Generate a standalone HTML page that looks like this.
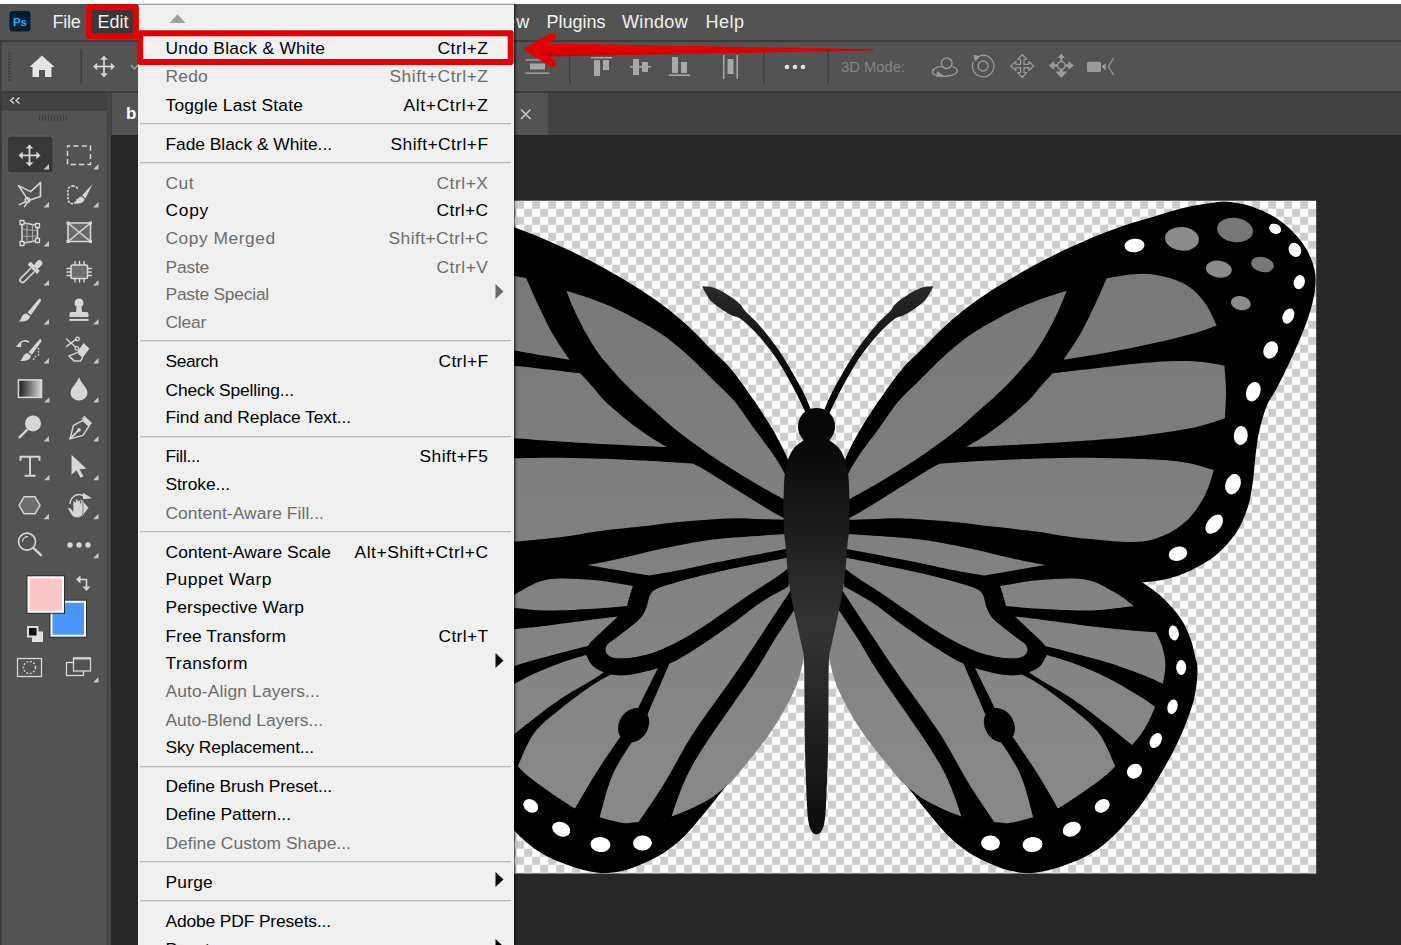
<!DOCTYPE html><html><head><meta charset="utf-8"><title>Photoshop Edit menu</title><style>

html,body{margin:0;padding:0}
html{width:1401px;height:945px;overflow:hidden}
body{width:1401px;height:945px;overflow:hidden;background:#282828;position:relative;font-family:"Liberation Sans", sans-serif;}
.abs{position:absolute}
#top{left:0;top:0;width:1401px;height:4px;background:#fff}
#menubar{left:0;top:4px;width:1401px;height:36px;background:#535353}
#mbline{left:0;top:40px;width:1401px;height:2px;background:#3b3b3b}
#optbar{left:0;top:42px;width:1401px;height:49px;background:#535353}
#obline{left:0;top:91px;width:1401px;height:2px;background:#3b3b3b}
#tabbar{left:0;top:93px;width:1401px;height:42px;background:#424242}
#tab{left:112px;top:93px;width:436px;height:42px;background:#535353}
.mb{position:absolute;top:4px;height:36px;line-height:37px;color:#f0f0f0;font-size:18px;white-space:nowrap}
.mi{position:absolute;height:28px;line-height:28px;font-size:17.4px;white-space:nowrap;color:#000}
.mi.d{color:#6d6d6d}
.sep{position:absolute;left:140px;width:371px;height:1px;background:#b9b9b9;border-bottom:1px solid #e2e2e2}
#menu{left:137.5px;top:4px;width:376px;height:941px;background:#f0f0f0;box-shadow:1px 0 0 rgba(0,0,0,.3),2px 0 2px rgba(0,0,0,.4);border-top:1px solid #999;box-sizing:border-box}
svg{position:absolute;left:0;top:0}

</style></head><body>
<svg width="1401" height="945" viewBox="0 0 1401 945">
<defs><pattern id="ck" x="316.2" y="200.7" width="16" height="16" patternUnits="userSpaceOnUse"><rect width="16" height="16" fill="#fff"/><rect x="8" width="8" height="8" fill="#ccc"/><rect y="8" width="8" height="8" fill="#ccc"/></pattern></defs>
<rect x="316.2" y="200.7" width="1000" height="672.8" fill="url(#ck)"/>
<defs><linearGradient id="gw" gradientUnits="userSpaceOnUse" x1="0" y1="230" x2="0" y2="830"><stop offset="0" stop-color="#777"/><stop offset="1" stop-color="#898989"/></linearGradient><linearGradient id="gb" gradientUnits="userSpaceOnUse" x1="0" y1="286" x2="0" y2="835"><stop offset="0" stop-color="#2a2a2a"/><stop offset="0.2" stop-color="#000"/><stop offset="0.3" stop-color="#0a0a0a"/><stop offset="0.62" stop-color="#343434"/><stop offset="1" stop-color="#0c0c0c"/></linearGradient><clipPath id="cv"><rect x="316.2" y="200.7" width="1000" height="672.8"/></clipPath></defs>
<g clip-path="url(#cv)">
<g id="rw"><path d="M845 462C845.3 460.9 844.2 460.9 846.7 455.6C849.2 450.3 854.6 439.2 860 430C865.4 420.8 872.1 410.5 879 400.5C885.9 390.5 894.5 378.2 901.3 370C908.1 361.8 912.6 358.5 920 351.1C927.4 343.7 936.9 333.4 945.4 325.7C953.9 318 962.3 311.1 970.8 304.8C979.3 298.5 988 292.9 996.2 287.6C1004.4 282.4 1012.3 277.7 1020 273.3C1027.7 268.9 1034.8 265 1042.2 261.1C1049.6 257.2 1057 253.5 1064.4 250C1071.8 246.5 1079.3 243.2 1086.7 240C1094.1 236.8 1101.5 233.9 1108.9 231.1C1116.3 228.3 1123.7 225.7 1131.1 223.3C1138.5 220.9 1145.9 218.9 1153.3 216.7C1160.7 214.5 1168.2 211.9 1175.6 210C1183 208.1 1189.7 206.5 1197.8 205.1C1205.9 203.7 1216.2 201.7 1224.4 201.7C1232.6 201.7 1239.3 203 1246.7 205C1254.1 207 1262.2 210.4 1268.9 213.9C1275.6 217.4 1281.2 221.3 1286.7 226.1C1292.2 230.9 1298 236.9 1302.2 242.8C1306.5 248.7 1310 255.6 1312.2 261.7C1314.4 267.8 1315.4 273.1 1315.6 279.4C1315.8 285.7 1314.8 292.3 1313.3 299.4C1311.8 306.4 1309.3 314.3 1306.7 321.7C1304.1 329.1 1301.1 336.1 1297.8 343.9C1294.5 351.7 1290.4 360.5 1286.7 368.3C1283 376.1 1278.9 384.4 1275.6 390.6C1272.3 396.8 1269.6 398.7 1266.9 405.4C1264.2 412.1 1261.2 422.4 1259.3 430.8C1257.4 439.2 1256.6 447.7 1255.5 456.1C1254.4 464.6 1254.2 473 1252.9 481.5C1251.6 490 1250.7 498.4 1247.9 506.9C1245.2 515.4 1241.7 524.3 1236.4 532.3C1231.1 540.3 1223.7 548.8 1216.1 555.1C1208.5 561.5 1199.2 566.4 1190.8 570.4C1182.3 574.4 1173.5 577.2 1165.4 579.2C1157.4 581.2 1146.3 582 1142.5 582.5C1135.4 583.8 1116.2 590.4 1100 590C1083.8 589.6 1067.5 585 1045 580C1022.5 575 986.7 565.8 965 560C943.3 554.2 935.8 548.3 915 545C894.2 541.7 852.5 540.8 840 540C840 528.3 840 481.7 840 470C840.8 468.7 844.2 463.3 845 462Z" fill="#000"/>
<path d="M842 534C868.3 535 973.7 539 1000 540C1023.8 547.1 1118.8 575.4 1142.5 582.5C1145.8 585 1156.2 591.7 1162.5 597.5C1168.8 603.3 1175.4 610.8 1180 617.5C1184.6 624.2 1187.5 631.1 1190 637.5C1192.5 643.9 1193.8 650.6 1195 656C1196.2 661.4 1197.7 662.7 1197.5 670C1197.3 677.3 1196.7 688.8 1193.8 700C1190.8 711.2 1185.6 725 1180 737.5C1174.4 750 1167.5 762.5 1160 775C1152.5 787.5 1145 800.4 1135 812.5C1125 824.6 1112.1 838.6 1100 847.5C1087.9 856.4 1075 861.8 1062.5 866C1050 870.2 1037.5 873.6 1025 873C1012.5 872.4 1000 868.4 987.5 862.5C975 856.6 964.2 851.2 950 837.5C935.8 823.8 910 789.6 902 780C898.3 775 887 763.3 880 750C873 736.7 865 716.7 860 700C855 683.3 852.5 666.7 850 650C847.5 633.3 846.3 619.3 845 600C843.7 580.7 842.5 545 842 534Z" fill="#000"/>
<path d="M1066.7 290.8C1063.4 291.9 1054.5 294.5 1047 297.1C1039.5 299.8 1030.1 303 1021.6 306.7C1013.1 310.4 1004.7 314.8 996.2 319.4C987.7 324 979.3 328.7 970.8 334.6C962.3 340.5 952.2 349 945.4 354.9C938.6 360.8 934.5 365.4 929.8 370C925.1 374.6 922.4 377.4 917.1 382.7C911.8 388 904.7 393.8 898.1 401.7C891.5 409.6 884.5 420.8 877.8 430C871.1 439.2 863.1 449.3 858 457C852.9 464.7 848.8 472.8 847 476C847 480.1 847 496.4 847 500.5C850.6 498.5 860.2 493.5 868.6 488.6C877 483.8 887.6 477.3 897.1 471.4C906.6 465.4 916.2 459.4 925.7 452.9C935.2 446.3 944.8 439.7 954.3 432.1C963.8 424.5 976.8 412.5 982.9 407.1C989 401.8 986.8 404 991.1 400C995.4 396 1003.8 388.1 1008.9 382.9C1014 377.7 1017.4 373.8 1021.6 368.9C1025.8 364 1030.1 359.6 1034.3 353.7C1038.5 347.8 1042.8 340.9 1047 333.3C1051.2 325.7 1056.4 315 1059.7 307.9C1063 300.8 1065.5 293.6 1066.7 290.8Z" fill="url(#gw)"/>
<path d="M1106.7 278.2C1110.8 277.6 1123.3 275 1131.1 274.4C1138.9 273.8 1145.9 273.5 1153.3 274.4C1160.7 275.3 1168.9 277.4 1175.6 280C1182.3 282.6 1188.1 285.7 1193.3 290C1198.5 294.3 1202.8 299.7 1206.7 305.6C1210.6 311.5 1215 322.3 1216.7 325.6C1213.5 326.7 1208.4 329.2 1197.8 332.2C1187.2 335.1 1168.1 340 1153.3 343.3C1138.5 346.6 1123.9 349.5 1108.9 352.2C1093.9 354.9 1071.1 358.4 1063.5 359.7C1066.2 355.5 1074.7 344 1080 334.6C1085.3 325.2 1091.1 312.7 1095.6 303.3C1100 293.9 1104.8 282.4 1106.7 278.2Z" fill="url(#gw)"/>
<path d="M1052.7 373.3C1062.1 372.2 1092.1 368.6 1108.9 366.7C1125.7 364.8 1140.3 363.1 1153.3 362.2C1166.3 361.3 1177.4 361 1186.7 361.1C1196 361.2 1202.6 362.1 1208.9 362.9C1215.2 363.6 1221.8 365.2 1224.4 365.6C1224.7 369.7 1225.9 381.4 1226 390C1226.1 398.6 1225.2 412.9 1225 417.5C1224.2 417.9 1226.2 418.1 1220 420C1213.8 421.9 1203.3 425.8 1187.5 428.8C1171.7 431.7 1149.6 435 1125 437.5C1100.4 440 1061.3 442.2 1040 443.6C1018.7 445 1009.4 445.1 997.1 445.7C984.8 446.3 971.5 446.9 966.4 447.1C969.1 445.4 977.8 440.4 982.9 437.1C988 433.8 992.4 430.7 997.1 427.1C1001.9 423.5 1006 420.2 1011.4 415.7C1016.8 411.2 1024.3 404.9 1029.2 400C1034.1 395.1 1037.1 390.4 1041 386C1044.9 381.6 1050.8 375.4 1052.7 373.3Z" fill="url(#gw)"/>
<path d="M846 520C849.8 517.9 860.1 512.2 868.6 507.1C877.1 502 887.6 495.2 897.1 489.3C906.6 483.4 918.6 475.7 925.7 471.4C932.9 467.1 937.6 464.9 940 463.6C944.8 463.3 959.1 462.2 968.6 461.7C978.1 461.1 985.2 460.8 997.1 460.3C1009 459.8 1022.9 459 1040 458.6C1057.2 458.2 1077.5 457.6 1100 458C1122.5 458.4 1156 459 1175 461C1194 463 1207.3 468.5 1213.8 470C1212.3 474.2 1209.4 486.7 1205 495C1200.6 503.3 1194.6 513.2 1187.5 520C1180.4 526.8 1171.7 532.3 1162.5 536C1153.3 539.7 1147.1 541.8 1132.5 542C1117.9 542.2 1090.4 539.1 1075 537.5C1059.6 535.9 1050.6 533.6 1040 532.1C1029.4 530.6 1020.9 529.7 1011.4 528.6C1001.9 527.5 992.4 526.5 982.9 525.4C973.4 524.3 963.8 523 954.3 522.1C944.8 521.2 935.2 520.3 925.7 519.7C916.2 519.1 906.6 518.4 897.1 518.3C887.6 518.2 877.1 519 868.6 519.3C860.1 519.6 849.8 519.9 846 520Z" fill="url(#gw)"/>
<path d="M847 534C858.3 534.8 895.3 536.8 915 539C934.7 541.2 948.3 544.2 965 547.5C981.7 550.8 1001.7 556.1 1015 559C1028.3 561.9 1040 564 1045 565C1034.8 566.8 994 573.8 983.8 575.5C978.5 574.6 964 572.2 952.5 570C941 567.8 932.6 565.5 915 562C897.4 558.5 858.3 551.2 847 549C847 546.5 847 536.5 847 534Z" fill="url(#gw)"/>
<path d="M845 557.5C856.8 559.9 896.8 567.8 915.7 572C934.6 576.2 948.6 580.1 958.6 582.9C968.6 585.7 971.7 586.6 975.7 588.6C979.8 590.6 981 591.7 982.9 595C984.8 598.3 985.1 604.4 987 608.6C988.9 612.8 989.5 615.3 994.3 620C999.1 624.7 1010.4 632.7 1015.7 637C1021.1 641.3 1024.7 642.8 1026.4 645.7C1028.1 648.6 1027.5 652.2 1025.7 654.3C1023.9 656.4 1020.9 657.9 1015.7 658.3C1010.5 658.6 1001.4 657.8 994.3 656.4C987.2 655 981.2 653.5 972.9 650C964.6 646.5 953.8 641.2 944.3 635.7C934.8 630.2 925.2 623.5 915.7 617C906.2 610.5 896.5 603.4 887 597C877.5 590.6 865.6 583.3 858.6 578.6C851.6 573.9 847.3 570.3 845 568.6C845 566.8 845 559.4 845 557.5Z" fill="url(#gw)"/>
<path d="M1000 586C1006.7 585 1025.8 581.1 1040 580C1054.2 578.9 1072.5 577.4 1085 579.5C1097.5 581.6 1106.9 588.1 1115 592.5C1123.1 596.9 1130.6 603.8 1133.8 606C1126.5 606.8 1105.6 610 1090 610.5C1074.4 611 1054 609.5 1040 608.8C1026 608 1011.7 606.5 1006 606C1005.5 604.2 1004 598.3 1003 595C1002 591.7 1000.5 587.5 1000 586Z" fill="url(#gw)"/>
<path d="M1015 616.5C1019.2 617 1027.4 617.9 1040 619.5C1052.6 621.1 1073.9 624.2 1090.8 626.2C1107.7 628.2 1130.7 630.3 1141.6 631.3C1152.5 632.3 1153.6 632.1 1156 632.2C1157 634.5 1160.4 641.2 1161.9 645.7C1163.4 650.2 1164.5 655.1 1165 659.3C1165.5 663.5 1165.4 667 1165 671.1C1164.6 675.2 1163.2 681.7 1162.8 683.8C1159.3 682.2 1150.8 678 1141.6 674.5C1132.4 671 1119 666.1 1107.7 662.6C1096.4 659.1 1084.4 656.1 1073.9 653.3C1063.5 650.5 1049.8 647.2 1045 646C1044.2 645 1045 644.9 1040 640C1035 635.1 1019.2 620.4 1015 616.5Z" fill="url(#gw)"/>
<path d="M838 583C843.8 586.3 862.3 596 872.9 602.9C883.5 609.8 890.7 616.7 901.4 624.3C912.1 631.9 926.4 641.9 937 648.6C947.6 655.3 954.8 660.1 964.8 664.3C974.8 668.5 987.8 672 997 673.8C1006.2 675.5 1013 675.9 1020 674.8C1027 673.7 1034.5 670.3 1039 667C1043.5 663.7 1045.5 657 1046.8 655C1051.3 656.4 1063.8 659.7 1073.9 663.5C1084.1 667.3 1096.4 672.2 1107.7 677.9C1119 683.5 1133.7 692.6 1141.6 697.4C1149.5 702.2 1152.8 705.2 1155.1 706.7C1154 709.2 1150.9 717.1 1148.4 721.9C1145.9 726.7 1142.9 731.3 1139.9 735.5C1136.9 739.7 1134.3 742.3 1130.6 747C1126.9 751.7 1122.6 758.2 1117.5 763.8C1112.4 769.2 1110 772.5 1100 780C1090 787.5 1067.9 802.8 1057.5 808.8C1047.1 814.8 1045 813.7 1037.5 816C1030 818.3 1018.8 821.4 1012.5 822.5C1006.2 823.6 1007.9 823.3 1000 822.5C992.1 821.7 977.5 821.2 965 817.5C952.5 813.8 935.8 806.2 925 800C914.2 793.8 904.2 783.3 900 780C893.8 772.1 872.9 747.9 862.5 732.5C852.1 717.1 843.2 701.2 837.5 687.5C831.8 673.8 829.9 661.2 828 650C826.1 638.8 824.3 631.2 826 620C827.7 608.8 836 589.2 838 583Z" fill="url(#gw)"/>
<path d="M842 590C847.2 597.8 863.6 622.8 873 637C882.4 651.2 887.4 658.9 898.6 675C909.8 691.1 928.3 715.8 940 733.8C951.7 751.8 959.1 767.9 968.6 783.3C978.1 798.7 992.3 818.9 997 826C991.5 825.7 969.5 824.3 964 824C960 814 954 789.1 940 764.3C926 739.5 893.6 695.7 880 675C866.4 654.3 865.9 651.5 858.6 640C851.3 628.5 839.8 611.7 836 606C837 603.3 841 592.7 842 590Z" fill="#000"/>
<path d="M962 660C965.8 668.8 980.1 702.2 984.8 712.9C989.5 723.6 989.1 722.1 990 724C991.7 723.7 998.3 722.3 1000 722C999.2 719.8 999.5 718.3 995.2 709C990.9 699.7 977.5 673.2 974 666C972 665 964 661 962 660Z" fill="#000"/>
<ellipse cx="999.4" cy="725.2" rx="14.5" ry="18" fill="#000" transform="rotate(-32 999.4 725.2)"/>
<path d="M997 736C999.2 735.5 1007.8 733.5 1010 733C1013.6 738.2 1025.3 755 1031.4 764.3C1037.5 773.6 1041.9 781 1046.7 789C1051.5 797 1057.8 808.2 1060 812C1055.7 813.3 1038.3 818.7 1034 820C1031.7 812.3 1026.2 787.8 1020 773.8C1013.8 759.8 1000.8 742.3 997 736Z" fill="#000"/>
<path d="M1026 670C1028.3 671.6 1032 674.6 1040 679.6C1048 684.6 1062.6 692.3 1073.9 699.9C1085.2 707.5 1097.9 717.6 1107.7 725.3C1117.5 733 1128.8 742.5 1133 746C1130.2 749.7 1118.8 764.3 1116 768C1113.2 762.3 1106.3 743.5 1099.3 733.8C1092.3 724.1 1083.8 718.2 1073.9 710C1064 701.8 1049.5 691 1040 684.7C1030.5 678.4 1020.8 674.1 1017 672C1018.5 671.7 1024.5 670.3 1026 670Z" fill="#000"/>
<ellipse cx="1134.5" cy="245.5" rx="10" ry="6.8" fill="#fff" transform="rotate(-5 1134.5 245.5)"/>
<ellipse cx="1182" cy="238.8" rx="17" ry="11.8" fill="#8b8b8b" transform="rotate(5 1182 238.8)"/>
<ellipse cx="1235" cy="230" rx="18" ry="12" fill="#777" transform="rotate(8 1235 230)"/>
<ellipse cx="1218.8" cy="269.2" rx="13" ry="8.5" fill="#8b8b8b" transform="rotate(8 1218.8 269.2)"/>
<ellipse cx="1262.5" cy="264.5" rx="11.5" ry="7.5" fill="#777" transform="rotate(12 1262.5 264.5)"/>
<ellipse cx="1240.8" cy="303.2" rx="10" ry="7" fill="#8b8b8b" transform="rotate(10 1240.8 303.2)"/>
<ellipse cx="1275.1" cy="228.8" rx="6.2" ry="4.9" fill="#fff" transform="rotate(25 1275.1 228.8)"/>
<ellipse cx="1294.9" cy="249.9" rx="6" ry="7.3" fill="#fff" transform="rotate(-25 1294.9 249.9)"/>
<ellipse cx="1299.3" cy="282.1" rx="5.5" ry="7.2" fill="#fff" transform="rotate(15 1299.3 282.1)"/>
<ellipse cx="1288.4" cy="316.1" rx="5.5" ry="8" fill="#fff" transform="rotate(25 1288.4 316.1)"/>
<ellipse cx="1270.7" cy="349.9" rx="7" ry="9" fill="#fff" transform="rotate(25 1270.7 349.9)"/>
<ellipse cx="1253.3" cy="391.7" rx="7" ry="10" fill="#fff" transform="rotate(20 1253.3 391.7)"/>
<ellipse cx="1240.8" cy="435.5" rx="7" ry="9.5" fill="#fff" transform="rotate(5 1240.8 435.5)"/>
<ellipse cx="1233" cy="484.2" rx="7.5" ry="10.5" fill="#fff" transform="rotate(20 1233 484.2)"/>
<ellipse cx="1214.2" cy="524.2" rx="7" ry="11" fill="#fff" transform="rotate(40 1214.2 524.2)"/>
<ellipse cx="1178" cy="553.8" rx="9.5" ry="7" fill="#fff" transform="rotate(-15 1178 553.8)"/>
<ellipse cx="1173.8" cy="633" rx="5" ry="7.5" fill="#fff" transform="rotate(-10 1173.8 633)"/>
<ellipse cx="1181.2" cy="667.5" rx="5" ry="7.5" fill="#fff"/>
<ellipse cx="1172.5" cy="706.8" rx="5" ry="7.5" fill="#fff" transform="rotate(15 1172.5 706.8)"/>
<ellipse cx="1155.8" cy="740.5" rx="5.5" ry="8" fill="#fff" transform="rotate(30 1155.8 740.5)"/>
<ellipse cx="1134.5" cy="771.2" rx="8" ry="7" fill="#fff" transform="rotate(-40 1134.5 771.2)"/>
<ellipse cx="1102.2" cy="805.8" rx="8" ry="6.2" fill="#fff" transform="rotate(-35 1102.2 805.8)"/>
<ellipse cx="1071.8" cy="829.2" rx="9.5" ry="7" fill="#fff" transform="rotate(-25 1071.8 829.2)"/>
<ellipse cx="1032.5" cy="844.5" rx="10" ry="7.5" fill="#fff" transform="rotate(-5 1032.5 844.5)"/>
<ellipse cx="990.5" cy="843" rx="9.5" ry="7.5" fill="#fff" transform="rotate(5 990.5 843)"/></g>
<use href="#rw" transform="translate(1633,0) scale(-1,1)"/>
<path d="M824.6 409.2C825.7 406.7 828.1 400.3 831 394.4C833.9 388.5 837.9 381.3 842.2 373.9C846.5 366.5 851.4 357.8 857 349.8C862.6 341.8 870.2 332 875.6 325.7C881 319.4 886.1 315.5 889.5 311.8C892.9 308.1 892.8 306.3 896 303.4C899.2 300.4 904.7 296.7 909 294.1C913.3 291.5 918 288.9 922 287.6C926 286.3 931.2 286.5 933.1 286.3C932.8 287 932.8 287.8 931.3 290.4C929.8 292.9 927 298.4 923.9 301.6C920.8 304.9 916.1 307.6 912.7 309.9C909.3 312.2 906.5 313.9 903.4 315.5C900.3 317.1 898.2 316.3 894.2 319.2C890.2 322.1 884.6 327.4 879.3 333.1C874 338.8 867.5 346.7 862.6 353.5C857.7 360.3 853.6 367.1 849.6 373.9C845.6 380.7 841.9 387.7 838.5 394.4C835.1 401.1 830.6 410.7 829 414C828.3 413.2 825.3 410 824.6 409.2Z" fill="url(#gb)"/>
<g transform="translate(1635.4,0) scale(-1,1)"><path d="M824.6 409.2C825.7 406.7 828.1 400.3 831 394.4C833.9 388.5 837.9 381.3 842.2 373.9C846.5 366.5 851.4 357.8 857 349.8C862.6 341.8 870.2 332 875.6 325.7C881 319.4 886.1 315.5 889.5 311.8C892.9 308.1 892.8 306.3 896 303.4C899.2 300.4 904.7 296.7 909 294.1C913.3 291.5 918 288.9 922 287.6C926 286.3 931.2 286.5 933.1 286.3C932.8 287 932.8 287.8 931.3 290.4C929.8 292.9 927 298.4 923.9 301.6C920.8 304.9 916.1 307.6 912.7 309.9C909.3 312.2 906.5 313.9 903.4 315.5C900.3 317.1 898.2 316.3 894.2 319.2C890.2 322.1 884.6 327.4 879.3 333.1C874 338.8 867.5 346.7 862.6 353.5C857.7 360.3 853.6 367.1 849.6 373.9C845.6 380.7 841.9 387.7 838.5 394.4C835.1 401.1 830.6 410.7 829 414C828.3 413.2 825.3 410 824.6 409.2Z" fill="url(#gb)"/></g>
<circle cx="816.5" cy="426.5" r="18.6" fill="#060606"/>
<path d="M829 440C830.5 441.2 835.5 444.2 838 447C840.5 449.8 842.4 453.2 844 457C845.6 460.8 846.7 464.5 847.6 470C848.5 475.5 848.9 480.8 849.2 490C849.5 499.2 849.6 515.8 849.3 525C849 534.2 848.4 535.4 847.5 545C846.6 554.6 845.8 570.4 844 582.9C842.2 595.4 839.1 609.6 837 620C834.9 630.4 832.8 638.3 831.5 645C830.2 651.7 829.5 650.8 829 660C828.5 669.2 828.7 685 828.5 700C828.3 715 828.4 732.5 828 750C827.6 767.5 826.6 793 826 805C825.4 817 825.2 817.7 824.5 822C823.8 826.3 822.8 828.9 821.5 831C820.2 833.1 818.2 834.5 816.5 834.5C814.8 834.5 812.8 833.1 811.5 831C810.2 828.9 809.2 826.3 808.5 822C807.8 817.7 807.6 817 807 805C806.4 793 805.4 767.5 805 750C804.6 732.5 804.7 715 804.5 700C804.3 685 804.5 669.2 804 660C803.5 650.8 802.8 651.7 801.5 645C800.2 638.3 798.1 630.4 796 620C793.9 609.6 790.8 595.4 789 582.9C787.2 570.4 786.4 554.6 785.5 545C784.6 535.4 784 534.2 783.7 525C783.4 515.8 783.5 499.2 783.8 490C784.1 480.8 784.5 475.5 785.4 470C786.3 464.5 787.4 460.8 789 457C790.6 453.2 792.5 449.8 795 447C797.5 444.2 802.5 441.2 804 440C808.2 440 824.8 440 829 440Z" fill="url(#gb)"/>
</g>
</svg>
<div id="top" class="abs"></div><div id="menubar" class="abs"></div><div id="mbline" class="abs"></div><div id="optbar" class="abs"></div><div id="obline" class="abs"></div><div id="tabbar" class="abs"></div><div id="tab" class="abs"></div><div class="abs" style="left:92px;top:10px;width:41px;height:23px;background:#383838"></div>
<svg width="1401" height="945" viewBox="0 0 1401 945">
<rect x="9.5" y="11" width="21" height="20.5" rx="3.5" fill="#001e36"/>
<text x="20" y="26" text-anchor="middle" font-family="Liberation Sans, sans-serif" font-weight="bold" font-size="11.5" fill="#31a8ff">Ps</text>
<rect x="0" y="42" width="1.5" height="49" fill="#3c3c3c"/>
<rect x="8" y="52.5" width="3" height="1.2" fill="#3d3d3d"/>
<rect x="8" y="55.5" width="3" height="1.2" fill="#3d3d3d"/>
<rect x="8" y="58.5" width="3" height="1.2" fill="#3d3d3d"/>
<rect x="8" y="61.5" width="3" height="1.2" fill="#3d3d3d"/>
<rect x="8" y="64.5" width="3" height="1.2" fill="#3d3d3d"/>
<rect x="8" y="67.5" width="3" height="1.2" fill="#3d3d3d"/>
<rect x="8" y="70.5" width="3" height="1.2" fill="#3d3d3d"/>
<rect x="8" y="73.5" width="3" height="1.2" fill="#3d3d3d"/>
<rect x="8" y="76.5" width="3" height="1.2" fill="#3d3d3d"/>
<rect x="8" y="79.5" width="3" height="1.2" fill="#3d3d3d"/>
<path d="M42 55.5 L54.5 67 L51.5 67 L51.5 77 L45 77 L45 70 L39 70 L39 77 L32.5 77 L32.5 67 L29.5 67 Z" fill="#e4e4e4"/>
<rect x="80.5" y="49" width="1.5" height="35" fill="#3e3e3e"/>
<g transform="translate(104,66.5)"><g transform="rotate(0)"><path d="M0 0 L0 -8" stroke="#d6d6d6" stroke-width="1.7" fill="none"/><path d="M-3.8 -6.8 L0 -11 L3.8 -6.8 Z" fill="#d6d6d6" stroke="none"/></g><g transform="rotate(90)"><path d="M0 0 L0 -8" stroke="#d6d6d6" stroke-width="1.7" fill="none"/><path d="M-3.8 -6.8 L0 -11 L3.8 -6.8 Z" fill="#d6d6d6" stroke="none"/></g><g transform="rotate(180)"><path d="M0 0 L0 -8" stroke="#d6d6d6" stroke-width="1.7" fill="none"/><path d="M-3.8 -6.8 L0 -11 L3.8 -6.8 Z" fill="#d6d6d6" stroke="none"/></g><g transform="rotate(270)"><path d="M0 0 L0 -8" stroke="#d6d6d6" stroke-width="1.7" fill="none"/><path d="M-3.8 -6.8 L0 -11 L3.8 -6.8 Z" fill="#d6d6d6" stroke="none"/></g></g>
<path d="M131 65 L134.5 69 L138 65" stroke="#aaa" stroke-width="1.2" fill="none"/>
<rect x="530" y="63.5" width="15" height="6" fill="#a8a8a8"/><rect x="525.5" y="72.5" width="24" height="1.3" fill="#a8a8a8"/><rect x="525.5" y="59.3" width="24" height="1.3" fill="#a8a8a8"/>
<rect x="569" y="49" width="1.5" height="35" fill="#3e3e3e"/>
<rect x="591" y="57" width="21" height="1.5" fill="#a8a8a8"/><rect x="594" y="60" width="6" height="16" fill="#a8a8a8"/><rect x="603" y="60" width="6" height="10" fill="#a8a8a8"/>
<rect x="630" y="66" width="21" height="1.5" fill="#a8a8a8"/><rect x="633" y="59" width="6" height="16" fill="#a8a8a8"/><rect x="642" y="62" width="6" height="10" fill="#a8a8a8"/>
<rect x="669" y="74.5" width="21" height="1.5" fill="#a8a8a8"/><rect x="672" y="57" width="6" height="16" fill="#a8a8a8"/><rect x="681" y="62" width="6" height="11" fill="#a8a8a8"/>
<rect x="723" y="55" width="1.5" height="24" fill="#a8a8a8"/><rect x="736.5" y="55" width="1.5" height="24" fill="#a8a8a8"/><rect x="727.5" y="59" width="6" height="15" fill="#a8a8a8"/>
<rect x="763" y="49" width="1.5" height="35" fill="#3e3e3e"/>
<circle cx="787" cy="67" r="2.3" fill="#e2e2e2"/>
<circle cx="795" cy="67" r="2.3" fill="#e2e2e2"/>
<circle cx="803" cy="67" r="2.3" fill="#e2e2e2"/>
<rect x="827.5" y="49" width="1.5" height="35" fill="#3e3e3e"/>
<text x="841" y="71.5" font-family="Liberation Sans, sans-serif" font-size="15.5" fill="#858585" textLength="64" lengthAdjust="spacingAndGlyphs">3D Mode:</text>
<g stroke="#9b9b9b" stroke-width="1.3" fill="none" stroke-linecap="round" stroke-linejoin="round"><circle cx="946.7" cy="63.2" r="5.3"/><path d="M941.3 66.3 C935 67 931.5 70 932.8 73 C934.5 76.5 945 77.3 952 75.2 C958.5 73 959 69 953 66.8"/></g><path d="M937 71.3 L943.8 75.6 L936 76.8 Z" fill="#9b9b9b"/>
<g stroke="#9b9b9b" stroke-width="1.3" fill="none" stroke-linecap="round" stroke-linejoin="round"><circle cx="983.1" cy="66" r="5"/><path d="M980.3 55.6 A10.8 10.8 0 1 1 973 62.3"/></g><path d="M973.3 54.8 L980.5 56.3 L975 61.5 Z" fill="#9b9b9b"/>
<g transform="translate(1022.3,66)"><path d="M0 -11.5 L4.5 -6.5 L1.7 -6.5 L1.7 -1.7 L6.5 -1.7 L6.5 -4.5 L11.5 0 L6.5 4.5 L6.5 1.7 L1.7 1.7 L1.7 6.5 L4.5 6.5 L0 11.5 L-4.5 6.5 L-1.7 6.5 L-1.7 1.7 L-6.5 1.7 L-6.5 4.5 L-11.5 0 L-6.5 -4.5 L-6.5 -1.7 L-1.7 -1.7 L-1.7 -6.5 L-4.5 -6.5 Z" stroke="#9b9b9b" stroke-width="1.2" fill="none" stroke-linejoin="round"/></g>
<g transform="translate(1061.3,65.5)"><circle r="3.900" stroke="#9b9b9b" stroke-width="1.3" fill="none"/><g fill="#9b9b9b"><path d="M0 -12 L3.5 -7.5 L1 -7.5 L1 -4 L-1 -4 L-1 -7.5 L-3.5 -7.5 Z"/><path d="M-12.5 0 L-7 -4.5 L-7 -1.2 L-4 -1.2 L-4 1.2 L-7 1.2 L-7 4.5 Z"/><path d="M12.5 0 L7 -4.5 L7 -1.2 L4 -1.2 L4 1.2 L7 1.2 L7 4.5 Z"/><path d="M0 12.5 L6 6 L1.5 6 L1.5 4 L-1.5 4 L-1.5 6 L-6 6 Z"/></g></g>
<rect x="1087" y="61.7" width="14" height="10.2" rx="1.5" fill="#9b9b9b"/><path d="M1101.5 66.8 L1105.7 63 L1105.7 70.6 Z" fill="#9b9b9b"/><path d="M1113.5 58 L1108.5 66.5 L1113.5 75" stroke="#9b9b9b" stroke-width="1.2" fill="none"/>
<text x="126" y="118.5" font-family="Liberation Sans, sans-serif" font-weight="bold" font-size="17" fill="#fff">b</text>
<path d="M521 109.5 L530.5 119 M530.5 109.5 L521 119" stroke="#c8c8c8" stroke-width="1.6"/>
<rect x="0" y="93" width="111" height="852" fill="#3a3a3a"/>
<rect x="2" y="93" width="105" height="16.5" fill="#424242"/>
<rect x="2" y="110.5" width="105" height="835" fill="#535353"/>
<rect x="107.5" y="93" width="3" height="852" fill="#494949"/>
<path d="M14 97.5 L10.5 100.5 L14 103.5 M19.5 97.5 L16 100.5 L19.5 103.5" stroke="#ddd" stroke-width="1.3" fill="none"/>
<rect x="39" y="115" width="1" height="6" fill="#3f3f3f"/>
<rect x="42" y="115" width="1" height="6" fill="#3f3f3f"/>
<rect x="45" y="115" width="1" height="6" fill="#3f3f3f"/>
<rect x="48" y="115" width="1" height="6" fill="#3f3f3f"/>
<rect x="51" y="115" width="1" height="6" fill="#3f3f3f"/>
<rect x="54" y="115" width="1" height="6" fill="#3f3f3f"/>
<rect x="57" y="115" width="1" height="6" fill="#3f3f3f"/>
<rect x="60" y="115" width="1" height="6" fill="#3f3f3f"/>
<rect x="63" y="115" width="1" height="6" fill="#3f3f3f"/>
<rect x="66" y="115" width="1" height="6" fill="#3f3f3f"/>
<rect x="7.2" y="136" width="46" height="37" rx="3.5" fill="#383838" stroke="#606060" stroke-width="1"/>
<g transform="translate(29.5,155.4)"><g transform="rotate(0)"><path d="M0 0 L0 -8" stroke="#d6d6d6" stroke-width="1.8" fill="none"/><path d="M-3.8 -6.8 L0 -11 L3.8 -6.8 Z" fill="#d6d6d6" stroke="none"/></g><g transform="rotate(90)"><path d="M0 0 L0 -8" stroke="#d6d6d6" stroke-width="1.8" fill="none"/><path d="M-3.8 -6.8 L0 -11 L3.8 -6.8 Z" fill="#d6d6d6" stroke="none"/></g><g transform="rotate(180)"><path d="M0 0 L0 -8" stroke="#d6d6d6" stroke-width="1.8" fill="none"/><path d="M-3.8 -6.8 L0 -11 L3.8 -6.8 Z" fill="#d6d6d6" stroke="none"/></g><g transform="rotate(270)"><path d="M0 0 L0 -8" stroke="#d6d6d6" stroke-width="1.8" fill="none"/><path d="M-3.8 -6.8 L0 -11 L3.8 -6.8 Z" fill="#d6d6d6" stroke="none"/></g></g><path d="M49 169.4 l0 -5.5 l-5.5 5.5 z" fill="#c8c8c8"/>
<g transform="translate(79,155.4)" fill="none" stroke="#d6d6d6" stroke-width="1.6" stroke-linecap="round" stroke-linejoin="round"><rect x="-11.5" y="-9.5" width="23" height="18.5" stroke-dasharray="5.2 3.2" stroke-dashoffset="2.6" stroke-linecap="butt" stroke-width="1.5"/></g><path d="M98.5 169.4 l0 -5.5 l-5.5 5.5 z" fill="#c8c8c8"/>
<g transform="translate(29.5,193.6)" fill="none" stroke="#d6d6d6" stroke-width="1.6" stroke-linecap="round" stroke-linejoin="round"><path d="M-11 -8 L1 -2 L11 -11 L11 3 L-1 7 Z"/><circle cx="-2" cy="6.5" r="2.3"/><path d="M-4 8 L-10 11 M-2.5 9 L-5 13"/></g><path d="M49 207.6 l0 -5.5 l-5.5 5.5 z" fill="#c8c8c8"/>
<g transform="translate(79,193.6)" fill="none" stroke="#d6d6d6" stroke-width="1.6" stroke-linecap="round" stroke-linejoin="round"><path d="M-6 -7.5 a4.5 4.5 0 0 0 -5 4.5 l0 8 a4.5 4.5 0 0 0 9 1" stroke-dasharray="1.2 2.4" /><path d="M-6 -7.5 a4.5 4.5 0 0 1 5 4" stroke-dasharray="1.2 2.4"/><path d="M13.5 -9.5 L3 2 L6.5 5 Z" fill="#d6d6d6" stroke="none"/><path d="M2.5 3 c-4 0 -4 5 -7.5 6.5 c5 1.5 10 0 10.5 -4 Z" fill="#d6d6d6" stroke="none"/></g><path d="M98.5 207.6 l0 -5.5 l-5.5 5.5 z" fill="#c8c8c8"/>
<g transform="translate(29.5,232.5)" fill="none" stroke="#d6d6d6" stroke-width="1.6" stroke-linecap="round" stroke-linejoin="round"><path d="M-7.5 -10 L8 -7 L8 8 L-7.5 11 Z"/><path d="M-2.5 -9 L-2.5 10 M3 -8 L3 9 M-7.5 -3 L8 -2 M-7.5 4 L8 3.5" stroke-width="1.1" stroke="#aaa"/><g fill="#535353" stroke-width="1.3"><rect x="-9.5" y="-12" width="4" height="4"/><rect x="6" y="-9" width="4" height="4"/><rect x="6" y="6" width="4" height="4"/><rect x="-9.5" y="9" width="4" height="4"/></g></g><path d="M49 246.5 l0 -5.5 l-5.5 5.5 z" fill="#c8c8c8"/>
<g transform="translate(79,232.5)" fill="none" stroke="#d6d6d6" stroke-width="1.6" stroke-linecap="round" stroke-linejoin="round"><rect x="-11" y="-9.5" width="22.5" height="18.5" fill="#6a6a6a"/><path d="M-11 -9.5 L11.5 9 M11.5 -9.5 L-11 9"/><g fill="#d6d6d6" stroke="none"><rect x="-12.5" y="-11" width="3" height="3"/><rect x="10" y="-11" width="3" height="3"/><rect x="-12.5" y="7.5" width="3" height="3"/><rect x="10" y="7.5" width="3" height="3"/></g></g>
<g transform="translate(29.5,271.5)" fill="none" stroke="#d6d6d6" stroke-width="1.6" stroke-linecap="round" stroke-linejoin="round"><path d="M1 -3 L-9 7 a2.5 2.5 0 0 0 3.5 3.5 L4.5 0.5" stroke-width="1.7"/><path d="M-1 -7 L7.5 1.5 L9.5 -0.5 L1 -9 Z M4 -5 L8 -10 a2.2 2.2 0 0 1 3.5 3.5 L6.5 -2" fill="#d6d6d6" stroke-width="1.2"/></g><path d="M49 285.5 l0 -5.5 l-5.5 5.5 z" fill="#c8c8c8"/>
<g transform="translate(79,271.5)" fill="none" stroke="#d6d6d6" stroke-width="1.6" stroke-linecap="round" stroke-linejoin="round"><rect x="-8" y="-6.5" width="16.5" height="13.5" rx="1.5" fill="#6e6e6e"/><path d="M-4 -10 L-4 -7 M0.5 -10 L0.5 -7 M5 -10 L5 -7 M-4 7.5 L-4 10.5 M0.5 7.5 L0.5 10.5 M5 7.5 L5 10.5 M-12 -3 L-8.5 -3 M-12 0.5 L-8.5 0.5 M-12 4 L-8.5 4 M9 -3 L12.5 -3 M9 0.5 L12.5 0.5 M9 4 L12.5 4" stroke-width="1.4"/></g><path d="M98.5 285.5 l0 -5.5 l-5.5 5.5 z" fill="#c8c8c8"/>
<g transform="translate(29.5,310.4)" fill="none" stroke="#d6d6d6" stroke-width="1.6" stroke-linecap="round" stroke-linejoin="round"><path d="M11 -11.5 c1 0.5 0.5 2 -0.5 3.5 L1.5 4.5 L-2 2 L8 -10 c1 -1.2 2 -2 3 -1.5 Z" fill="#d6d6d6" stroke="none"/><path d="M-3 3 L0.5 5.5 c0 4 -5 6.5 -11.5 5.5 c3.5 -1.5 2.5 -8 8 -8 Z" fill="#d6d6d6" stroke="none"/></g><path d="M49 324.4 l0 -5.5 l-5.5 5.5 z" fill="#c8c8c8"/>
<g transform="translate(79,310.4)" fill="none" stroke="#d6d6d6" stroke-width="1.6" stroke-linecap="round" stroke-linejoin="round"><g fill="#d6d6d6" stroke="none"><circle cx="0" cy="-7.5" r="4.5"/><path d="M-2.5 -4 L2.5 -4 L3 2 L-3 2 Z"/><path d="M-9.5 6.5 L-9.5 3.5 a2 2 0 0 1 2 -2 L7.5 1.5 a2 2 0 0 1 2 2 L9.5 6.5 Z"/><rect x="-9.5" y="8.5" width="19" height="2"/></g></g><path d="M98.5 324.4 l0 -5.5 l-5.5 5.5 z" fill="#c8c8c8"/>
<g transform="translate(29.5,349.4)" fill="none" stroke="#d6d6d6" stroke-width="1.6" stroke-linecap="round" stroke-linejoin="round"><g transform="translate(1,1) scale(.95)"><path d="M11 -11.5 c1 0.5 0.5 2 -0.5 3.5 L1.5 4.5 L-2 2 L8 -10 c1 -1.2 2 -2 3 -1.5 Z" fill="#d6d6d6" stroke="none"/><path d="M-3 3 L0.5 5.5 c0 4 -5 6.5 -11.5 5.5 c3.5 -1.5 2.5 -8 8 -8 Z" fill="#d6d6d6" stroke="none"/></g><path d="M-11 -4.5 c2 -4 7 -5 10 -3" stroke-width="1.5"/><path d="M-14 -3 L-8 -7 L-8.5 -2 Z" fill="#d6d6d6" stroke="none"/><path d="M9 -1 L9 6 M6 7 L4 10" stroke-dasharray="0.5 2.5" stroke-width="1.5"/></g><path d="M49 363.4 l0 -5.5 l-5.5 5.5 z" fill="#c8c8c8"/>
<g transform="translate(79,349.4)" fill="none" stroke="#d6d6d6" stroke-width="1.6" stroke-linecap="round" stroke-linejoin="round"><path d="M-2 3 L4.5 -6.5 L10.5 -1 L3.5 8.5 Z" fill="#d6d6d6" stroke="none"/><path d="M-2.5 3.5 L-10 6.5 L-5 11.5 L1.5 11.5 L3.5 8.5" stroke-width="1.5"/><path d="M-12.5 -10.5 L-3.5 -2.5 M-12.5 -3 L-3 -10" stroke-width="1.4"/><circle cx="-2" cy="-1" r="1.8" stroke-width="1.3"/><circle cx="-1.5" cy="-10.5" r="1.8" stroke-width="1.3"/></g><path d="M98.5 363.4 l0 -5.5 l-5.5 5.5 z" fill="#c8c8c8"/>
<defs><linearGradient id="tg" x1="0" x2="1" y1="0" y2="0"><stop offset="0" stop-color="#1a1a1a"/><stop offset="1" stop-color="#d8d8d8"/></linearGradient></defs>
<g transform="translate(30,388.4)" fill="none" stroke="#d6d6d6" stroke-width="1.6" stroke-linecap="round" stroke-linejoin="round"><rect x="-11.5" y="-8.5" width="23" height="17.5" fill="url(#tg)" stroke-width="1.6" stroke-linejoin="miter"/></g><path d="M49.5 402.4 l0 -5.5 l-5.5 5.5 z" fill="#c8c8c8"/>
<g transform="translate(79,388.4)" fill="none" stroke="#d6d6d6" stroke-width="1.6" stroke-linecap="round" stroke-linejoin="round"><path d="M0 -11.5 C2 -5 8.5 -1 8.5 4.5 a8.5 7.5 0 0 1 -17 0 C-8.5 -1 -2 -5 0 -11.5 Z" fill="#d6d6d6" stroke="none"/></g><path d="M98.5 402.4 l0 -5.5 l-5.5 5.5 z" fill="#c8c8c8"/>
<g transform="translate(29.5,427.4)" fill="none" stroke="#d6d6d6" stroke-width="1.6" stroke-linecap="round" stroke-linejoin="round"><circle cx="3.5" cy="-4" r="8" fill="#d6d6d6" stroke="none"/><path d="M-2.5 2.5 L-10 10" stroke-width="2.2"/></g><path d="M49 441.4 l0 -5.5 l-5.5 5.5 z" fill="#c8c8c8"/>
<g transform="translate(79,427.4)" fill="none" stroke="#d6d6d6" stroke-width="1.6" stroke-linecap="round" stroke-linejoin="round"><path d="M4 -7 L10 -1.5 L4 8 L-9 11.5 L-5.5 -2 Z" stroke-width="1.5"/><path d="M-8.5 11 L-0.5 3"/><circle cx="0" cy="2.5" r="1.8" fill="#d6d6d6" stroke="none"/><path d="M5.5 -11 L12.5 -4.5 L10.5 -2 L3.5 -8.5 Z" fill="#d6d6d6" stroke-width="1"/></g><path d="M98.5 441.4 l0 -5.5 l-5.5 5.5 z" fill="#c8c8c8"/>
<g transform="translate(30,466.3)" fill="none" stroke="#d6d6d6" stroke-width="1.6" stroke-linecap="round" stroke-linejoin="round"><path d="M-9.5 -5.5 L-9.5 -9.5 L9.5 -9.5 L9.5 -5.5 M0 -9.5 L0 9.5 M-5.5 9.5 L5.5 9.5" stroke-width="1.900" stroke-linecap="butt" stroke-linejoin="miter"/></g><path d="M49.5 480.3 l0 -5.5 l-5.5 5.5 z" fill="#c8c8c8"/>
<g transform="translate(79,466.3)" fill="none" stroke="#d6d6d6" stroke-width="1.6" stroke-linecap="round" stroke-linejoin="round"><path d="M-7.5 -11.5 L-7.5 8.5 L-2.5 4 L1.5 11.5 L4.5 10 L0.5 3 L7.5 2.5 Z" fill="#d6d6d6" stroke="none"/></g><path d="M98.5 480.3 l0 -5.5 l-5.5 5.5 z" fill="#c8c8c8"/>
<g transform="translate(29.5,505.3)" fill="none" stroke="#d6d6d6" stroke-width="1.6" stroke-linecap="round" stroke-linejoin="round"><path d="M-10.5 0 L-5.5 -8.5 L5.5 -8.5 L10.5 0 L5.5 8.5 L-5.5 8.5 Z" fill="#6e6e6e" stroke-width="1.5"/></g><path d="M49 519.3 l0 -5.5 l-5.5 5.5 z" fill="#c8c8c8"/>
<g transform="translate(79,505.3)" fill="none" stroke="#d6d6d6" stroke-width="1.6" stroke-linecap="round" stroke-linejoin="round"><path d="M-9 -2 c1 -8 9 -11 14 -7" stroke-width="1.4"/><path d="M4 -12.5 L13 -7 L4 -6 Z" fill="#d6d6d6" stroke="none"/><path d="M2 -6 L9.5 2.5 L3 11 L-1 8 Z" fill="#d6d6d6" stroke="none"/><path d="M-11.5 3 c3 -2 4 1 5.5 3 L-6 -3 a1.2 1.2 0 0 1 2.4 0 L-3.5 -5 a1.2 1.2 0 0 1 2.4 0 L-1 -4 a1.2 1.2 0 0 1 2.4 0 L1.5 -2 a1.2 1.2 0 0 1 2.4 0 L4 6 c0 4 -2 6.5 -6 6.5 c-5 0 -6 -4 -9.5 -9.5 Z" fill="#d6d6d6" stroke="#535353" stroke-width="0.7"/></g><path d="M98.5 519.3 l0 -5.5 l-5.5 5.5 z" fill="#c8c8c8"/>
<g transform="translate(29.5,544.2)" fill="none" stroke="#d6d6d6" stroke-width="1.6" stroke-linecap="round" stroke-linejoin="round"><circle cx="-2.5" cy="-2.5" r="8.5" stroke-width="1.7"/><path d="M4 4 L11.5 11" stroke-width="2.4"/><path d="M-7 -3 a5 5 0 0 1 5 -4.5" stroke-width="1.2"/></g>
<g fill="#d6d6d6"><circle cx="70" cy="545" r="2.7"/><circle cx="79" cy="545" r="2.7"/><circle cx="88" cy="545" r="2.7"/></g><path d="M98.5 558.2 l0 -5.5 l-5.5 5.5 z" fill="#c8c8c8"/>
<rect x="49.5" y="599.7" width="37.5" height="38" fill="#2a2a2a"/><rect x="50.5" y="600.7" width="35.5" height="36" fill="#fff"/><rect x="52.5" y="602.7" width="31.5" height="32" fill="#4795ff"/>
<rect x="26.5" y="575.3" width="38.5" height="38.5" fill="#2a2a2a"/><rect x="27.5" y="576.3" width="36.5" height="36.5" fill="#fff"/><rect x="29.5" y="578.3" width="32.5" height="32.5" fill="#ffc6c6"/>
<g stroke="#d6d6d6" stroke-width="1.6" fill="none"><path d="M79 579.5 L86.5 579.5 L86.5 587"/></g><path d="M76 579.5 L80.5 575.5 L80.5 583.5 Z M86.5 591 L82.5 586.5 L90.5 586.5 Z" fill="#d6d6d6"/>
<rect x="32" y="631.5" width="11" height="10.5" fill="#e0e0e0"/><rect x="27" y="626" width="11.5" height="11.5" fill="#dcdcdc"/><rect x="29" y="628" width="7.5" height="7.5" fill="#111"/>
<rect x="17.5" y="658.5" width="24" height="18" fill="none" stroke="#d6d6d6" stroke-width="1.3"/><circle cx="29.5" cy="667.5" r="6" fill="none" stroke="#d6d6d6" stroke-width="1.4" stroke-dasharray="1.8 1.7"/>
<rect x="66.5" y="662.5" width="17" height="13" fill="#535353" stroke="#d6d6d6" stroke-width="1.3"/><rect x="73.5" y="658" width="17" height="13" fill="#535353" stroke="#d6d6d6" stroke-width="1.3"/><rect x="73.5" y="657.5" width="17" height="2" fill="#d6d6d6"/><path d="M98.5 682.5 l0 -5.5 l-5.5 5.5 z" fill="#c8c8c8"/>
<rect x="106.5" y="690" width="1" height="255" fill="#444"/>
</svg>
<div class="mb" style="left:52.5px;letter-spacing:-0.254px;">File</div>
<div class="mb" style="left:97.5px;letter-spacing:-0.008px;">Edit</div>
<div class="mb" style="left:488.5px;letter-spacing:0.699px;">View</div>
<div class="mb" style="left:546.5px;letter-spacing:-0.007px;">Plugins</div>
<div class="mb" style="left:622px;letter-spacing:0.328px;">Window</div>
<div class="mb" style="left:705.5px;letter-spacing:0.492px;">Help</div>
<div id="menu" class="abs"></div>
<div class="sep" style="top:123px"></div>
<div class="sep" style="top:162px"></div>
<div class="sep" style="top:340px"></div>
<div class="sep" style="top:436px"></div>
<div class="sep" style="top:531px"></div>
<div class="sep" style="top:766px"></div>
<div class="sep" style="top:861px"></div>
<div class="sep" style="top:900px"></div>
<div class="mi" style="left:165.5px;letter-spacing:0.286px;top:33.6px;">Undo Black &amp; White</div>
<div class="mi" style="left:437.5px;letter-spacing:0.529px;top:33.6px;">Ctrl+Z</div>
<div class="mi d" style="left:165.5px;letter-spacing:0.230px;top:61.6px;">Redo</div>
<div class="mi d" style="left:389.5px;letter-spacing:0.518px;top:61.6px;">Shift+Ctrl+Z</div>
<div class="mi" style="left:165.5px;letter-spacing:0.183px;top:90.6px;">Toggle Last State</div>
<div class="mi" style="left:403.5px;letter-spacing:0.672px;top:90.6px;">Alt+Ctrl+Z</div>
<div class="mi" style="left:165.5px;letter-spacing:-0.034px;top:129.6px;">Fade Black &amp; White...</div>
<div class="mi" style="left:390.5px;letter-spacing:0.435px;top:129.6px;">Shift+Ctrl+F</div>
<div class="mi d" style="left:165.5px;letter-spacing:0.479px;top:168.6px;">Cut</div>
<div class="mi d" style="left:436.5px;letter-spacing:0.531px;top:168.6px;">Ctrl+X</div>
<div class="mi" style="left:165.5px;letter-spacing:0.723px;top:195.6px;">Copy</div>
<div class="mi" style="left:436.5px;letter-spacing:0.372px;top:195.6px;">Ctrl+C</div>
<div class="mi d" style="left:165.5px;letter-spacing:0.518px;top:223.6px;">Copy Merged</div>
<div class="mi d" style="left:388.5px;letter-spacing:0.440px;top:223.6px;">Shift+Ctrl+C</div>
<div class="mi d" style="left:165.5px;letter-spacing:-0.197px;top:252.6px;">Paste</div>
<div class="mi d" style="left:436.5px;letter-spacing:0.531px;top:252.6px;">Ctrl+V</div>
<div class="mi d" style="left:165.5px;letter-spacing:-0.219px;top:279.6px;">Paste Special</div>
<div class="mi d" style="left:165.5px;letter-spacing:-0.212px;top:307.6px;">Clear</div>
<div class="mi" style="left:165.5px;letter-spacing:-0.435px;top:346.6px;">Search</div>
<div class="mi" style="left:438.5px;letter-spacing:0.362px;top:346.6px;">Ctrl+F</div>
<div class="mi" style="left:165.5px;letter-spacing:-0.118px;top:375.6px;">Check Spelling...</div>
<div class="mi" style="left:165.5px;letter-spacing:-0.072px;top:402.6px;">Find and Replace Text...</div>
<div class="mi" style="left:165.5px;letter-spacing:-0.317px;top:441.6px;">Fill...</div>
<div class="mi" style="left:419.5px;letter-spacing:0.469px;top:441.6px;">Shift+F5</div>
<div class="mi" style="left:165.5px;letter-spacing:-0.030px;top:469.6px;">Stroke...</div>
<div class="mi d" style="left:165.5px;letter-spacing:0.060px;top:498.6px;">Content-Aware Fill...</div>
<div class="mi" style="left:165.5px;letter-spacing:0.078px;top:537.6px;">Content-Aware Scale</div>
<div class="mi" style="left:354.5px;letter-spacing:0.552px;top:537.6px;">Alt+Shift+Ctrl+C</div>
<div class="mi" style="left:165.5px;letter-spacing:0.513px;top:564.6px;">Puppet Warp</div>
<div class="mi" style="left:165.5px;letter-spacing:0.118px;top:592.6px;">Perspective Warp</div>
<div class="mi" style="left:165.5px;letter-spacing:0.116px;top:621.6px;">Free Transform</div>
<div class="mi" style="left:438.5px;letter-spacing:0.362px;top:621.6px;">Ctrl+T</div>
<div class="mi" style="left:165.5px;letter-spacing:0.434px;top:648.6px;">Transform</div>
<div class="mi d" style="left:165.5px;letter-spacing:0.137px;top:676.6px;">Auto-Align Layers...</div>
<div class="mi d" style="left:165.5px;letter-spacing:-0.004px;top:705.6px;">Auto-Blend Layers...</div>
<div class="mi" style="left:165.5px;letter-spacing:-0.128px;top:732.6px;">Sky Replacement...</div>
<div class="mi" style="left:165.5px;letter-spacing:-0.165px;top:771.6px;">Define Brush Preset...</div>
<div class="mi" style="left:165.5px;letter-spacing:-0.010px;top:799.6px;">Define Pattern...</div>
<div class="mi d" style="left:165.5px;letter-spacing:0.039px;top:828.6px;">Define Custom Shape...</div>
<div class="mi" style="left:165.5px;letter-spacing:0.219px;top:867.6px;">Purge</div>
<div class="mi" style="left:165.5px;letter-spacing:-0.134px;top:906.6px;">Adobe PDF Presets...</div>
<div class="mi" style="left:165.5px;letter-spacing:-1.210px;top:934.6px;">Presets</div>
<svg width="1401" height="945" viewBox="0 0 1401 945">
<path d="M169.7 22.9 L185.4 22.9 L177.5 14.3 Z" fill="#a0a0a0"/>
<path d="M495.5 284 L503.5 291.5 L495.5 299 Z" fill="#6d6d6d"/>
<path d="M495.5 653 L503.5 660.5 L495.5 668 Z" fill="#000"/>
<path d="M495.5 872 L503.5 879.5 L495.5 887 Z" fill="#000"/>
<path d="M495.5 939 L503.5 946.5 L495.5 954 Z" fill="#000"/>
<rect x="140.2" y="33.2" width="370.5" height="28.7" fill="none" stroke="#e40000" stroke-width="6" stroke-linejoin="round"/>
<rect x="89.1" y="7.3" width="46.8" height="28.6" fill="none" stroke="#e40000" stroke-width="6" stroke-linejoin="round"/>
<defs><linearGradient id="ar" x1="0" y1="0" x2="0" y2="1"><stop offset="0" stop-color="#f00000"/><stop offset="1" stop-color="#c80000"/></linearGradient></defs>
<path d="M538 43.3 L874 49.2 L874 50.5 L538 56.7 Z" fill="url(#ar)"/>
<path d="M552.2 36.7 L530 49.3 L552.2 63" fill="none" stroke="#e60000" stroke-width="7.5" stroke-linecap="round" stroke-linejoin="miter"/>
<path d="M528 49.3 L545 43 L545 56.5 Z" fill="#e20000"/>
</svg>
</body></html>
